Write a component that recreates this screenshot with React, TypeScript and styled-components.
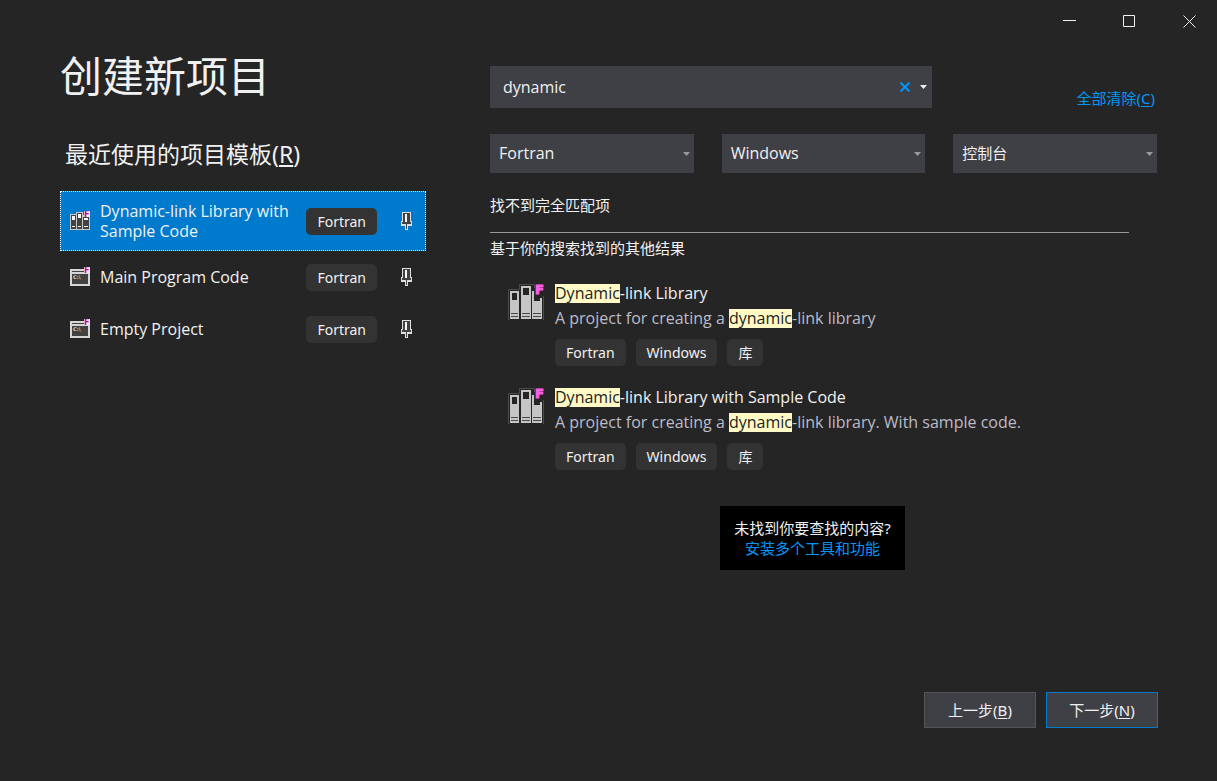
import React, { useState } from "react";
import styled, { createGlobalStyle } from "styled-components";

const latin = `"Open Sans", "Noto Sans CJK SC", sans-serif`;

const GlobalStyle = createGlobalStyle`
  *, *::before, *::after { box-sizing: border-box; }
  body {
    margin: 0;
    background: #252526;
    color: #f1f1f1;
    font: 15px/20px "Noto Sans", "Noto Sans CJK SC", sans-serif;
  }
  h1, h2, h3, p, ul { margin: 0; padding: 0; font-weight: 400; }
  ul { list-style: none; }
  button, input, select { font: inherit; color: inherit; }
  u { text-underline-offset: 2px; }
`;

const Window = styled.div`
  min-height: 100vh;
  display: flex;
  flex-direction: column;
`;

const TitleBar = styled.header`
  display: flex;
  justify-content: flex-end;
  gap: 4px;
`;

const CaptionButton = styled.button`
  width: 56px;
  height: 42px;
  display: grid;
  place-items: center;
  padding: 0;
  border: 0;
  background: none;
`;

const Body = styled.main`
  display: grid;
  grid-template-columns: 366px minmax(0, 1fr);
  column-gap: 64px;
  padding: 0 60px;
`;

const Recent = styled.section`
  padding-top: 6px;
`;

const Title = styled.h1`
  font-size: 42px;
  line-height: 56px;
`;

const Subtitle = styled.h2`
  margin: 34px 0 21px;
  padding-left: 5px;
  font-size: 23px;
  line-height: 32px;
`;

const RecentRow = styled.li<{ $selected?: boolean }>`
  display: grid;
  grid-template-columns: 20px minmax(0, 1fr) auto 48px;
  align-items: center;
  min-height: ${(p) => (p.$selected ? 60 : 52)}px;
  padding-left: 9px;
  border: 1px dotted ${(p) => (p.$selected ? "#ffffff" : "transparent")};
  background: ${(p) => (p.$selected ? "#007acc" : "transparent")};
`;

const RecentName = styled.span`
  padding: 0 10px;
  font-family: ${latin};
  font-size: 16px;
`;

const PinButton = styled.button`
  display: grid;
  place-items: center;
  justify-self: end;
  width: 36px;
  height: 28px;
  padding: 0;
  border: 0;
  background: none;
`;

const Tag = styled.span`
  display: inline-block;
  padding: 3px 11px;
  border-radius: 5px;
  background: #333334;
  font-size: 14px;
  line-height: 21px;
`;

const Results = styled.section`
  padding-top: 24px;
`;

const SearchRow = styled.div`
  display: flex;
  justify-content: space-between;
  align-items: flex-start;
`;

const SearchBox = styled.div`
  display: flex;
  align-items: center;
  flex: 0 1 442px;
  height: 42px;
  background: #3f3f46;
`;

const SearchInput = styled.input`
  flex: 1;
  min-width: 0;
  padding: 0 13px;
  border: 0;
  outline: 0;
  background: none;
  font-family: ${latin};
  font-size: 16px;
`;

const IconButton = styled.button`
  display: grid;
  place-items: center;
  width: 18px;
  height: 42px;
  padding: 0;
  border: 0;
  background: none;
`;

const Link = styled.a`
  color: #0097fb;
  text-decoration: none;
`;

const ClearLink = styled(Link)`
  margin: 22px 2px 0 0;
`;

const Filters = styled.div`
  display: grid;
  grid-template-columns: repeat(3, minmax(0, 1fr));
  gap: 28px;
  margin-top: 26px;
`;

const SelectBox = styled.label`
  position: relative;
  display: block;
`;

const Select = styled.select<{ $latin: boolean }>`
  display: block;
  width: 100%;
  height: 39px;
  padding: 0 9px 1px;
  border: 0;
  border-radius: 0;
  appearance: none;
  background: #3f3f46;
  font-family: ${latin};
  font-size: ${(p) => (p.$latin ? 16 : 15)}px;
`;

const SelectArrow = styled.span`
  position: absolute;
  right: 4px;
  top: 0;
  bottom: 0;
  display: flex;
  align-items: center;
  pointer-events: none;
`;

const ResultBody = styled.div`
  margin-right: 22px;
`;

const Message = styled.p`
  margin-top: 22px;
`;

const OtherHeading = styled.h3`
  margin: 17px 6px 0 0;
  padding-top: 5px;
  border-top: 1px solid #999999;
  font-size: 15px;
`;

const ResultItem = styled.li`
  display: grid;
  grid-template-columns: 36px minmax(0, 1fr);
  column-gap: 11px;
  align-items: start;
  padding-left: 18px;
`;

const ResultList = styled.ul`
  display: grid;
  row-gap: 19px;
  margin-top: 23px;
`;

const ResultText = styled.p<{ $muted?: boolean }>`
  font-family: ${latin};
  font-size: 16px;
  line-height: 25px;
  color: ${(p) => (p.$muted ? "#bcbcc6" : "#f1f1f1")};
`;

const Mark = styled.mark`
  display: inline-block;
  line-height: 19px;
  background: #fffac5;
  color: #1e1e1e;
`;

const Tags = styled.div`
  display: flex;
  gap: 10px;
  margin-top: 8px;
`;

const NotFound = styled.aside`
  width: fit-content;
  margin: 36px auto 0;
  padding: 12px 14px;
  background: #000000;
  text-align: center;
`;

const Footer = styled.footer`
  display: flex;
  justify-content: flex-end;
  gap: 10px;
  margin-top: auto;
  padding: 24px 59px 53px;
`;

const StepButton = styled.button<{ $primary?: boolean }>`
  width: 112px;
  height: 36px;
  border: 1px solid ${(p) => (p.$primary ? "#007acc" : "#555555")};
  background: #3f3f46;
`;

const IconLetter = styled.text`
  font-family: "DejaVu Sans", sans-serif;
  font-weight: 700;
`;

const LibraryIcon = () => (
  <svg width="36" height="40" viewBox="0 0 36 40" aria-hidden="true">
    <path d="M.5 39V8.500H11.500V3.500H26.500V7M35.500 39V15" fill="none" stroke="#4b4b4c" />
    <path
      fill="#c5c5c5"
      fillRule="evenodd"
      d="M2 10h9v28H2zM4 12v7h5v-7zM13 5h10v33H13zM15 7v7h6V7zM24 10h2v10h6v-3h2v21H24z"
    />
    <path d="M3 32.500h7M3 35.500h7M14 32.500h8M14 35.500h8M25 32.500h8M25 35.500h8" stroke="#4a4a4b" />
    <IconLetter x="27" y="13" fontSize="13" fill="#ff5fe8" stroke="#ff5fe8">F</IconLetter>
  </svg>
);

const SmallLibraryIcon = () => (
  <svg width="20" height="20" viewBox="0 0 20 20" aria-hidden="true">
    <path fill="#c9c9c9" d="M0 3h6v16H0zM6 1h7v18H6zM13 4h7v15h-7z" />
    <path fill="#424242" d="M1 4h5v14H1zM7 2h5v16H7zM13 6h6v12h-6z" />
    <path fill="#f6f6f6" d="M2 5h3v4H2zM8 3h3v4H8zM14 7h4v2h-4zM2 15h3v1H2zM8 15h3v1H8zM14 15h4v1h-4z" />
    <path fill="#f0e6ee" d="M14 0h6v6h-6z" />
    <IconLetter x="14" y="6" fontSize="8" fill="#c000a8">F</IconLetter>
  </svg>
);

const ConsoleIcon = () => (
  <svg width="20" height="20" viewBox="0 0 20 20" aria-hidden="true">
    <path fill="#d6d6d6" d="M0 2h20v17H0z" />
    <path fill="#424242" d="M2 4h16v1H2zM2 7h16v10H2z" />
    <IconLetter x="3" y="12" fontSize="5" fill="#d6d6d6">C:\</IconLetter>
    <path fill="#f0e6ee" d="M14 0h6v6h-6z" />
    <IconLetter x="14" y="6" fontSize="8" fill="#c000a8">F</IconLetter>
  </svg>
);

const PinIcon = () => (
  <svg width="12" height="18" viewBox="0 0 12 18" aria-hidden="true">
    <path fill="#dedede" d="M1 0h9v9h1v5H7v4H4v-4H0V9h1z" />
    <path fill="#424242" d="M2 1h7v9h1v2H6v5H5v-5H1v-2h1z" />
    <path fill="#f6f6f6" d="M4 2h2v8H4z" />
  </svg>
);

const Arrow = ({ color }: { color: string }) => (
  <svg width="7" height="4" viewBox="0 0 7 4" aria-hidden="true">
    <path d="M0 0h7L3.500 4z" fill={color} />
  </svg>
);

const recent = [
  { name: "Dynamic-link Library with Sample Code", library: true },
  { name: "Main Program Code", library: false },
  { name: "Empty Project", library: false },
];

const results = [
  { rest: "-link Library", tail: "-link library" },
  { rest: "-link Library with Sample Code", tail: "-link library. With sample code." },
];

const filters = [
  { label: "语言", value: "Fortran", latin: true },
  { label: "平台", value: "Windows", latin: true },
  { label: "项目类型", value: "控制台", latin: false },
];

export default function App() {
  const [query, setQuery] = useState("dynamic");
  return (
    <Window>
      <GlobalStyle />
      <TitleBar>
        <CaptionButton aria-label="最小化">
          <svg width="13" height="13"><path d="M0 5.500h13" stroke="#f1f1f1" /></svg>
        </CaptionButton>
        <CaptionButton aria-label="最大化">
          <svg width="14" height="14"><path d="M1.500 1.500h11v11h-11z" stroke="#f1f1f1" fill="none" /></svg>
        </CaptionButton>
        <CaptionButton aria-label="关闭">
          <svg width="13" height="13"><path d="M.5.5l12 12M12.500.5l-12 12" stroke="#f1f1f1" /></svg>
        </CaptionButton>
      </TitleBar>
      <Body>
        <Recent>
          <Title>创建新项目</Title>
          <Subtitle>最近使用的项目模板(<u>R</u>)</Subtitle>
          <ul>
            {recent.map((r) => (
              <RecentRow key={r.name} $selected={r.library}>
                {r.library ? <SmallLibraryIcon /> : <ConsoleIcon />}
                <RecentName>{r.name}</RecentName>
                <Tag>Fortran</Tag>
                <PinButton aria-label="固定"><PinIcon /></PinButton>
              </RecentRow>
            ))}
          </ul>
        </Recent>
        <Results>
          <SearchRow>
            <SearchBox>
              <SearchInput aria-label="搜索模板" value={query} onChange={(e) => setQuery(e.target.value)} />
              <IconButton aria-label="清除" onClick={() => setQuery("")}>
                <svg width="10" height="10"><path d="M.5.5l9 9M9.500.5l-9 9" stroke="#0097fb" strokeWidth="2" /></svg>
              </IconButton>
              <IconButton aria-label="搜索历史"><Arrow color="#f1f1f1" /></IconButton>
            </SearchBox>
            <ClearLink href="#clear">全部清除(<u>C</u>)</ClearLink>
          </SearchRow>
          <Filters>
            {filters.map((f) => (
              <SelectBox key={f.value}>
                <Select aria-label={f.label} $latin={f.latin}><option>{f.value}</option></Select>
                <SelectArrow><Arrow color="#999999" /></SelectArrow>
              </SelectBox>
            ))}
          </Filters>
          <ResultBody>
            <Message>找不到完全匹配项</Message>
            <OtherHeading>基于你的搜索找到的其他结果</OtherHeading>
            <ResultList>
              {results.map((r) => (
                <ResultItem key={r.rest}>
                  <LibraryIcon />
                  <div>
                    <ResultText><Mark>Dynamic</Mark>{r.rest}</ResultText>
                    <ResultText $muted>A project for creating a <Mark>dynamic</Mark>{r.tail}</ResultText>
                    <Tags><Tag>Fortran</Tag><Tag>Windows</Tag><Tag>库</Tag></Tags>
                  </div>
                </ResultItem>
              ))}
            </ResultList>
            <NotFound>
              <p>未找到你要查找的内容?</p>
              <Link href="#install">安装多个工具和功能</Link>
            </NotFound>
          </ResultBody>
        </Results>
      </Body>
      <Footer>
        <StepButton>上一步(<u>B</u>)</StepButton>
        <StepButton $primary>下一步(<u>N</u>)</StepButton>
      </Footer>
    </Window>
  );
}
